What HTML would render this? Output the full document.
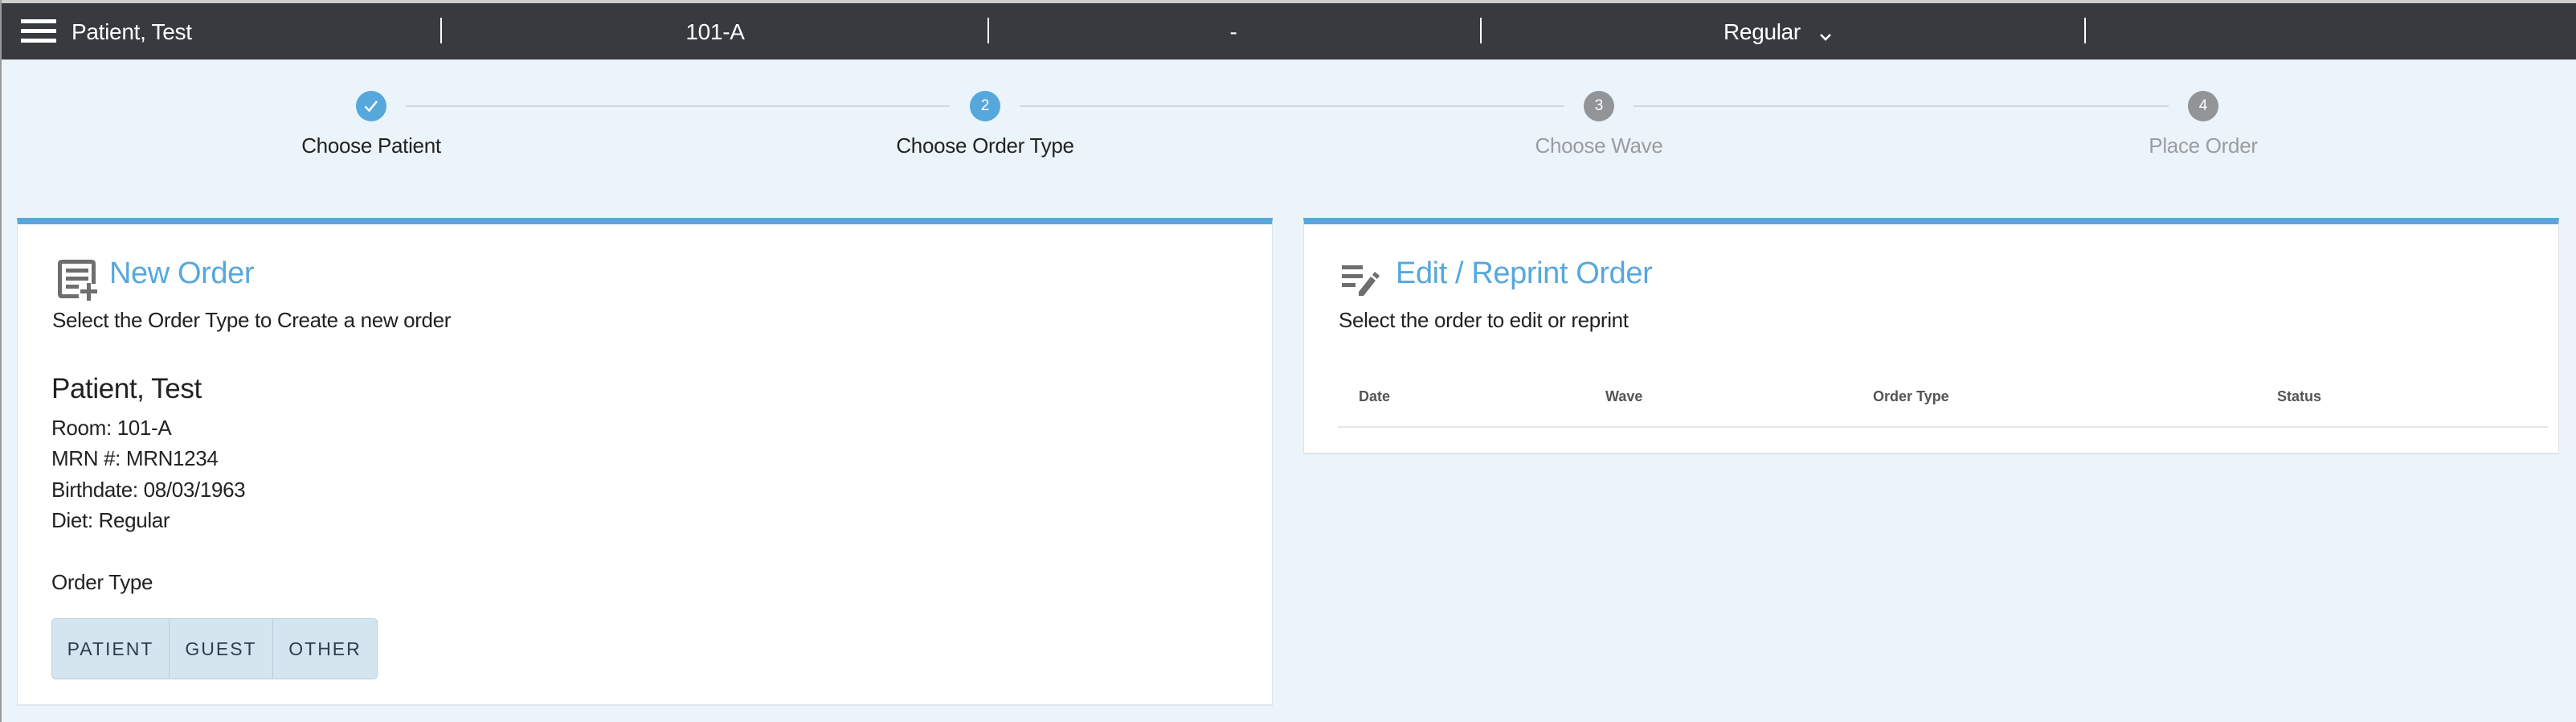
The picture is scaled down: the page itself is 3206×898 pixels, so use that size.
<!DOCTYPE html>
<html><head><meta charset="utf-8"><style>
*{margin:0;padding:0;box-sizing:border-box}
body{width:3206px;height:898px;background:#ebf4fa;font-family:"Liberation Sans",Arial,sans-serif;position:relative;overflow:hidden;color:#222}
.a{position:absolute;white-space:nowrap}
.bar{left:0;top:0;width:3206px;height:74px;background:#373a3f;border-top:4px solid #cfcfcf}
.div{top:22px;width:2px;height:32px;background:#fff}
.tb{color:#fff;font-size:28px;top:24px;letter-spacing:-0.3px}
.ham{left:26px;width:44px;height:5px;background:#fff}
.line{top:131px;height:2px;background:#cfd8dc}
.c{width:38px;height:38px;border-radius:50%;top:113px;color:#fff;font-size:19px;text-align:center;line-height:38px}
.lbl{top:166px;font-size:26px;transform:translateX(-50%);letter-spacing:-0.3px}
.card{background:#fff;border-top:8px solid #56a8dc;border-left:1px solid #dde5ea;border-right:1px solid #dde5ea;border-bottom:2px solid #dde5ea}
.t{font-size:26px;letter-spacing:-0.35px}
.th{font-size:18px;font-weight:bold;color:#555;top:483px}
</style></head><body>
<div class="a bar"></div>
<div class="a" style="left:0;top:0;width:2px;height:898px;background:#9a9a9a"></div>
<div class="a ham" style="top:24px"></div>
<div class="a ham" style="top:36px"></div>
<div class="a ham" style="top:48px"></div>
<div class="a tb" style="left:89px">Patient, Test</div>
<div class="a div" style="left:548px"></div>
<div class="a div" style="left:1229px"></div>
<div class="a div" style="left:1842px"></div>
<div class="a div" style="left:2594px"></div>
<div class="a tb" style="left:890px;transform:translateX(-50%)">101-A</div>
<div class="a tb" style="left:1535px;transform:translateX(-50%)">-</div>
<div class="a tb" style="left:2145px">Regular</div>
<svg class="a" style="left:2264px;top:40px" width="16" height="12" viewBox="0 0 16 12"><path d="M2 3 L8 9 L14 3" stroke="#fff" stroke-width="2.6" fill="none"/></svg>

<div class="a line" style="left:505px;width:677px"></div>
<div class="a line" style="left:1269px;width:678px"></div>
<div class="a line" style="left:2033px;width:666px"></div>
<div class="a c" style="left:443px;background:#56a8dc"><svg width="38" height="38" viewBox="0 0 38 38"><path d="M11.5 19.5 L16.5 24.5 L26 13" stroke="#fff" stroke-width="2.5" fill="none"/></svg></div>
<div class="a c" style="left:1207px;background:#56a8dc">2</div>
<div class="a c" style="left:1971px;background:#929597">3</div>
<div class="a c" style="left:2723px;background:#929597">4</div>
<div class="a lbl" style="left:462px">Choose Patient</div>
<div class="a lbl" style="left:1226px">Choose Order Type</div>
<div class="a lbl" style="left:1990px;color:#9a9da0">Choose Wave</div>
<div class="a lbl" style="left:2742px;color:#9a9da0">Place Order</div>

<div class="a card" style="left:21px;top:271px;width:1563px;height:607px"></div>
<svg class="a" style="left:72px;top:322px" width="52" height="52" viewBox="0 0 52 52"><path d="M5 1 H42 Q47 1 47 6 V31 H42 V6 H5 V44 H26 V49 H5 Q0 49 0 44 V6 Q0 1 5 1Z" fill="#6e6e6e"/><rect x="10" y="12" width="28" height="5" fill="#6e6e6e"/><rect x="10" y="22" width="28" height="5" fill="#6e6e6e"/><rect x="10" y="32" width="16" height="5" fill="#6e6e6e"/><rect x="36" y="30" width="5" height="22" fill="#6e6e6e"/><rect x="28" y="38" width="21" height="5" fill="#6e6e6e"/></svg>
<div class="a" style="left:136px;top:319px;font-size:38px;color:#56a8dc;letter-spacing:-0.4px">New Order</div>
<div class="a t" style="left:65px;top:383px">Select the Order Type to Create a new order</div>
<div class="a" style="left:64px;top:464px;font-size:35px;letter-spacing:-0.4px">Patient, Test</div>
<div class="a t" style="left:64px;top:517px">Room: 101-A</div>
<div class="a t" style="left:64px;top:555px">MRN #: MRN1234</div>
<div class="a t" style="left:64px;top:594px">Birthdate: 08/03/1963</div>
<div class="a t" style="left:64px;top:632px">Diet: Regular</div>
<div class="a t" style="left:64px;top:709px">Order Type</div>
<div class="a" style="left:64px;top:769px;width:406px;height:76px;background:#d4e5ef;border:1px solid #b8cfdd;border-radius:5px;display:flex;font-size:23px;letter-spacing:2px;color:#2c3e50">
<div style="width:146px;border-right:1px solid #b8cfdd;text-align:center;line-height:74px">PATIENT</div>
<div style="width:129px;border-right:1px solid #b8cfdd;text-align:center;line-height:74px">GUEST</div>
<div style="flex:1;text-align:center;line-height:74px">OTHER</div></div>

<div class="a card" style="left:1622px;top:271px;width:1563px;height:294px"></div>
<svg class="a" style="left:1670px;top:330px" width="54" height="38" viewBox="0 0 54 38"><rect x="0" y="0" width="26" height="5" fill="#6e6e6e"/><rect x="0" y="11" width="26" height="5" fill="#6e6e6e"/><rect x="0" y="22" width="17" height="5" fill="#6e6e6e"/><path d="M21 33 L36 14 L42 19 L27 38 H21Z M38 12 L41 8 L47 13 L44 17Z" fill="#6e6e6e"/></svg>
<div class="a" style="left:1737px;top:319px;font-size:38px;color:#56a8dc;letter-spacing:-0.4px">Edit / Reprint Order</div>
<div class="a t" style="left:1666px;top:383px">Select the order to edit or reprint</div>
<div class="a th" style="left:1691px">Date</div>
<div class="a th" style="left:1998px">Wave</div>
<div class="a th" style="left:2331px">Order Type</div>
<div class="a th" style="left:2834px">Status</div>
<div class="a" style="left:1665px;top:530px;width:1506px;height:2px;background:#e3e6e8"></div>
</body></html>
